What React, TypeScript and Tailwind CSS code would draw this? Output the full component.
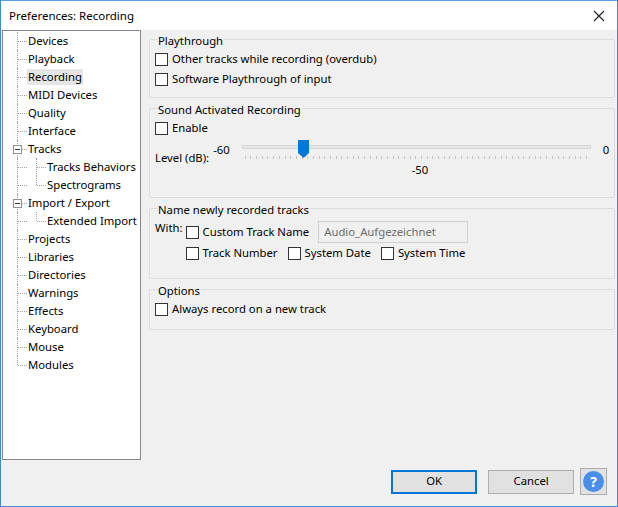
import React from "react";

const font = { fontFamily: '"Noto Sans", "Liberation Sans", sans-serif' };

type Node = { label: string; level: number; expander?: boolean; selected?: boolean; last?: boolean };

const nodes: Node[] = [
  { label: "Devices", level: 0 },
  { label: "Playback", level: 0 },
  { label: "Recording", level: 0, selected: true },
  { label: "MIDI Devices", level: 0 },
  { label: "Quality", level: 0 },
  { label: "Interface", level: 0 },
  { label: "Tracks", level: 0, expander: true },
  { label: "Tracks Behaviors", level: 1 },
  { label: "Spectrograms", level: 1, last: true },
  { label: "Import / Export", level: 0, expander: true },
  { label: "Extended Import", level: 1, last: true },
  { label: "Projects", level: 0 },
  { label: "Libraries", level: 0 },
  { label: "Directories", level: 0 },
  { label: "Warnings", level: 0 },
  { label: "Effects", level: 0 },
  { label: "Keyboard", level: 0 },
  { label: "Mouse", level: 0 },
  { label: "Modules", level: 0, last: true },
];

function TreeRow({ n }: { n: Node }) {
  return (
    <div className="flex h-[18px] items-center whitespace-nowrap">
      <div className="relative h-full w-[24px] shrink-0">
        <div
          className={`absolute left-[14px] top-0 border-l border-dotted border-[#a0a0a0] ${
            n.last && n.level === 0 ? "h-[9px]" : "h-full"
          }`}
        />
        <div className="absolute left-[15px] top-[9px] w-[9px] border-t border-dotted border-[#a0a0a0]" />
        {n.expander && (
          <div className="absolute left-[10px] top-[5px] flex h-[9px] w-[9px] items-center justify-center border border-[#919191] bg-white">
            <div className="h-px w-[5px] bg-[#333]" />
          </div>
        )}
      </div>
      {n.level === 1 && (
        <div className="relative h-full w-[19px] shrink-0">
          <div
            className={`absolute left-[9px] top-0 border-l border-dotted border-[#a0a0a0] ${n.last ? "h-[9px]" : "h-full"}`}
          />
          <div className="absolute left-[10px] top-[9px] w-[9px] border-t border-dotted border-[#a0a0a0]" />
        </div>
      )}
      <span className={`px-[1px] leading-[16px] ${n.selected ? "bg-[#e5e5e5]" : ""}`}>{n.label}</span>
    </div>
  );
}

function Check({ label }: { label: string }) {
  return (
    <label className="flex items-center gap-[4px] whitespace-nowrap">
      <span className="h-[13px] w-[13px] shrink-0 border border-[#333] bg-white" />
      <span>{label}</span>
    </label>
  );
}

function Group({ title, className, children }: { title: string; className?: string; children: React.ReactNode }) {
  return (
    <div className={`shrink-0 rounded-[2px] border border-[#dcdcdc] px-[5px] pt-[1px] ${className ?? ""}`}>
      <div className="-mt-[8px] mb-[2px] ml-[2px] w-fit bg-[#f0f0f0] px-[1px] leading-[16px]">{title}</div>
      {children}
    </div>
  );
}

export default function App() {
  const ticks = Array.from({ length: 61 });
  return (
    <div
      className="flex h-[507px] w-[618px] flex-col border border-t-0 border-[#3f8bd6] bg-[#f0f0f0] text-[11.3px] text-black"
      style={font}
    >
      <div className="flex h-[30px] shrink-0 items-center justify-between border-t border-[#5ea1dc] bg-white pl-[8px] pr-[12px]">
        <span className="text-[11.5px]">Preferences: Recording</span>
        <svg width="12" height="12" viewBox="0 0 12 12">
          <path d="M1 1 L11 11 M11 1 L1 11" stroke="#222" strokeWidth="1.2" />
        </svg>
      </div>
      <div className="flex flex-1">
        <div className="ml-[1px] h-[430px] w-[139px] shrink-0 border border-[#828790] bg-white pt-[1px]">
          {nodes.map((n) => (
            <TreeRow key={n.label} n={n} />
          ))}
        </div>
        <div className="ml-[8px] mr-[2px] flex flex-1 flex-col gap-[5px] pt-[9px]">
          <Group title="Playthrough" className="h-[59px]">
            <div className="flex flex-col gap-[3px]">
              <Check label="Other tracks while recording (overdub)" />
              <Check label="Software Playthrough of input" />
            </div>
          </Group>
          <Group title="Sound Activated Recording" className="mt-[5px] h-[90px]">
            <div className="mt-[2px]">
              <Check label="Enable" />
            </div>
            <div className="mt-[3px] flex whitespace-nowrap">
              <span className="mt-[10px]">Level (dB):</span>
              <span className="ml-[4px] mt-[2px]">-60</span>
              <div className="relative ml-[12px] h-[38px] w-[349px]">
                <div className="absolute left-0 right-0 top-[5px] h-[4px] border border-[#d6d6d6] bg-[#e7e7e7]" />
                <div className="absolute left-[3px] right-[3px] top-[16px] flex justify-between">
                  {ticks.map((_, i) => (
                    <div key={i} className="h-[3px] w-px bg-[#c4c4c4]" />
                  ))}
                </div>
                <svg className="absolute left-[56px] top-0" width="11" height="18" viewBox="0 0 11 18">
                  <path d="M0 0 H11 V13 L5.5 18 L0 13 Z" fill="#0078d7" />
                </svg>
                <span className="absolute left-[170px] top-[22px]">-50</span>
              </div>
              <span className="ml-[12px] mt-[2px]">0</span>
            </div>
          </Group>
          <Group title="Name newly recorded tracks" className="mt-[5px] h-[71px]">
            <div className="flex items-start gap-[3px]">
              <span className="leading-[16px]">With:</span>
              <div className="flex flex-col gap-[2px] pt-[1px]">
                <div className="flex items-center gap-[6px]">
                  <Check label="Custom Track Name" />
                  <div className="ml-[3px] flex h-[22px] w-[150px] items-center border border-[#d0d0d0] bg-[#f0f0f0] px-[5px] text-[#6d6d6d]">
                    Audio_Aufgezeichnet
                  </div>
                </div>
                <div className="flex items-center gap-[10px]">
                  <Check label="Track Number" />
                  <Check label="System Date" />
                  <Check label="System Time" />
                </div>
              </div>
            </div>
          </Group>
          <Group title="Options" className="mt-[5px] h-[41px]">
            <div className="mt-[1px]">
              <Check label="Always record on a new track" />
            </div>
          </Group>
          <div className="mt-auto mb-[11px] flex items-center justify-end gap-[11px] pr-[8px]">
            <button className="h-[24px] w-[86px] border-2 border-[#0078d7] bg-[#e1e1e1]">OK</button>
            <button className="h-[24px] w-[86px] border border-[#adadad] bg-[#e1e1e1]">Cancel</button>
            <div className="-ml-[5px] flex h-[27px] w-[27px] items-center justify-center border border-[#adadad] bg-[#e1e1e1]">
              <div className="flex h-[21px] w-[21px] items-center justify-center rounded-full bg-[#4a8fe7] text-[14px] font-bold text-white">
                ?
              </div>
            </div>
          </div>
        </div>
      </div>
    </div>
  );
}
